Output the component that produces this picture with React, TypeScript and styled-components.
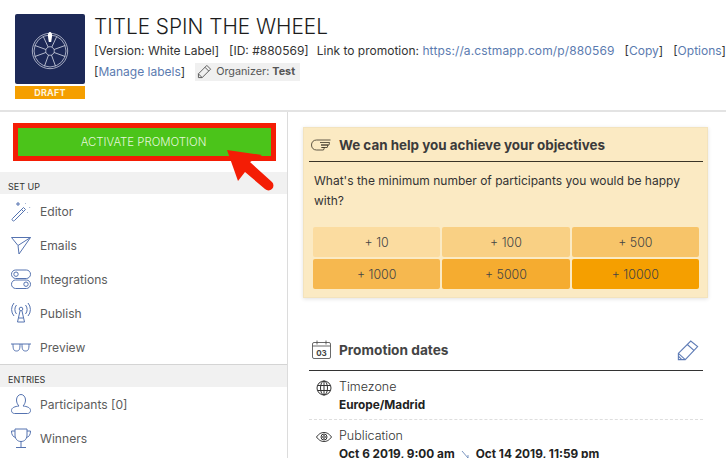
import * as React from 'react';
import styled, { createGlobalStyle } from 'styled-components';

const GlobalStyle = createGlobalStyle`
  html, body {
    margin: 0;
    padding: 0;
    background: #fff;
    font-family: Inter, "Liberation Sans", sans-serif;
    color: #333;
  }
  * { box-sizing: border-box; }
`;

const Page = styled.div`
  position: relative;
  width: 726px;
  height: 458px;
  overflow: hidden;
`;

const Header = styled.header`
  display: flex;
  height: 112px;
  padding: 14px 0 0 15px;
  border-bottom: 2px solid #e3e3e3;
`;

const LogoColumn = styled.div`
  display: flex;
  flex-direction: column;
  gap: 2px;
  width: 70px;
  margin-right: 9px;
`;

const LogoTile = styled.div`
  display: flex;
  align-items: center;
  justify-content: center;
  width: 70px;
  height: 70px;
  background: #1d2957;
  border-radius: 2px;
`;

const DraftBadge = styled.div`
  height: 13px;
  background: #f59f00;
  color: #fdf3dc;
  font-size: 9px;
  font-weight: 700;
  line-height: 13px;
  text-align: center;
  letter-spacing: 0.2px;
`;

const HeaderText = styled.div`
  display: flex;
  flex-direction: column;
`;

const Title = styled.h1`
  margin: 0;
  font-size: 20.8px;
  font-weight: 300;
  line-height: 25px;
  color: #1c1c1c;
  white-space: nowrap;
`;

const MetaRow = styled.div`
  display: flex;
  align-items: center;
  height: 21px;
  font-size: 12px;
  color: #333;
  white-space: nowrap;
`;

const FirstMeta = styled(MetaRow)`
  margin-top: 1px;
`;

const MetaItem = styled.span<{ $gap?: number }>`
  margin-right: ${(p) => p.$gap ?? 10}px;
`;

const Link = styled.span<{ $wide?: boolean }>`
  color: #5b7bb0;
  letter-spacing: ${(p) => (p.$wide ? '0.13px' : 'normal')};
`;

const OrganizerTag = styled.span`
  display: flex;
  align-items: center;
  gap: 4px;
  height: 18px;
  padding: 0 5px 0 2px;
  background: #f0f0f0;
  color: #555;
  font-size: 10.8px;
  b { font-weight: 700; }
`;

const Body = styled.div`
  display: flex;
  height: 346px;
`;

const Sidebar = styled.aside`
  flex: none;
  width: 288px;
  border-right: 1px solid #dcdcdc;
`;

const ActivateWrap = styled.div`
  padding: 11px 11px 11px 13px;
`;

const ActivateButton = styled.div`
  height: 38px;
  padding-right: 2px;
  background: #4bc41a;
  border: 5px solid #f41d05;
  color: #e6f7dc;
  font-size: 11.4px;
  font-weight: 300;
  line-height: 29px;
  text-align: center;
`;

const SectionLabel = styled.div<{ $ruled?: boolean }>`
  height: ${(p) => (p.$ruled ? '23px' : '22px')};
  padding: 9px 0 0 8px;
  background: #f1f1f1;
  border-top: ${(p) => (p.$ruled ? '1px solid #d4d4d4' : 'none')};
  font-size: 9px;
  line-height: 12px;
  color: #333;
`;

const MenuItem = styled.div`
  display: flex;
  align-items: center;
  height: 34px;
  padding-left: 10px;
  font-size: 12.1px;
  color: #5c5c5c;
`;

const MenuIcon = styled.svg`
  flex: none;
  width: 22px;
  height: 22px;
  margin-right: 8px;
  fill: none;
  stroke: #5573b0;
  stroke-width: 1;
`;

const Main = styled.main`
  flex: 1;
  padding: 15px 18px 0 15px;
`;

const ObjectivesCard = styled.section`
  height: 171px;
  padding: 0 4px 0 5px;
  background: #fbeac3;
  border: 1px solid #f3e3bd;
  box-shadow: 0 1px 4px rgba(0, 0, 0, 0.12);
`;

const CardTitle = styled.div`
  display: flex;
  align-items: center;
  gap: 8px;
  height: 34px;
  padding-left: 2px;
  border-bottom: 1px solid #3a3426;
  font-size: 13.4px;
  font-weight: 700;
  color: #3b3b3b;
  white-space: nowrap;
`;

const Question = styled.p`
  margin: 9px 0 0;
  padding: 0 5px;
  font-size: 12px;
  line-height: 20px;
  color: #333;
`;

const AmountGrid = styled.div`
  display: grid;
  grid-template-columns: repeat(3, 1fr);
  grid-auto-rows: 30px;
  gap: 2px;
  margin: 16px 4px 0;
`;

const AmountButton = styled.div<{ $bg: string }>`
  display: flex;
  align-items: center;
  justify-content: center;
  background: ${(p) => p.$bg};
  border-radius: 2px;
  font-size: 12.4px;
  font-weight: 300;
  color: #444;
`;

const DatesPanel = styled.section`
  margin: 32px 5px 0 6px;
`;

const DatesHeader = styled.div`
  display: flex;
  align-items: center;
  gap: 8px;
  height: 41px;
  padding: 0 0 1px 3px;
  border-bottom: 1px solid #333;
  font-size: 13.7px;
  font-weight: 700;
  color: #444;
`;

const EditIcon = styled.svg`
  margin: 0 4px 0 auto;
  width: 22px;
  height: 22px;
  fill: none;
  stroke: #5f7cb6;
  stroke-width: 0.8;
`;

const DateRow = styled.div<{ $dashed?: boolean }>`
  display: flex;
  height: 49px;
  padding: 9px 0 0 7px;
  border-bottom: ${(p) => (p.$dashed ? '1px dashed #dedede' : 'none')};
`;

const DateIcon = styled.svg`
  flex: none;
  width: 16px;
  height: 16px;
  margin-right: 7px;
  fill: none;
  stroke: #333;
  stroke-width: 1;
`;

const DateText = styled.div`
  display: flex;
  flex-direction: column;
  gap: 4px;
  font-size: 12.5px;
  line-height: 14px;
  font-weight: 300;
  color: #333;
  b {
    display: flex;
    align-items: center;
    font-size: 11.8px;
    font-weight: 700;
    color: #222;
    white-space: nowrap;
  }
`;

const DateSep = styled.svg`
  flex: none;
  width: 9px;
  height: 10px;
  margin: 2px 6px 0;
  fill: none;
  stroke: #5b7bb0;
  stroke-width: 0.8;
`;

const RedArrow = styled.svg`
  position: absolute;
  left: 222px;
  top: 146px;
  width: 56px;
  height: 46px;
`;

function Wheel() {
  const spokes = [25, 70, 110, 160, 200, 250, 290, 335];
  return (
    <svg width="38" height="42" viewBox="0 0 38 42" fill="none" stroke="#dfe3ee" strokeWidth="0.7">
      <circle cx="19" cy="23" r="17.7" />
      <circle cx="19" cy="23" r="16" />
      <circle cx="19" cy="23" r="4.300" />
      {spokes.map((a) => (
        <line key={a} x1="19" y1="18.700" x2="19" y2="7" transform={`rotate(${a} 19 23)`} />
      ))}
      <path d="M19 4c1.400 0 2.200 1.800 2.100 4L20.200 14h-2.400l-.9-6C16.800 5.800 17.600 4 19 4z" fill="#fff" stroke="none" />
    </svg>
  );
}

function Pencil() {
  return (
    <svg width="15" height="15" viewBox="0 0 16 16" fill="none" stroke="#555" strokeWidth="1">
      <path d="M1.500 10.500 10.500 1.500l4 4-9 9h-4zM8.500 3.500l4 4M1.500 10.500l4 4" />
    </svg>
  );
}

const menuSetup: [string, React.ReactNode][] = [
  ['Editor', (
    <>
      <path d="M2.500 18.500 13.500 7.500l2 2-11 11a1.400 1.400 0 0 1-2-2zM11.500 9.500l2 2" />
      <path d="M8 2v4M6 4h4M19.500 7.500h.6M15 3l.5.5M17 12l.5.5" />
    </>
  )],
  ['Emails', <path d="M1.500 3.500h19L9 20l-1-8.500zM8 11.500 20.500 3.500" />],
  ['Integrations', (
    <>
      <rect x="1.500" y="2" width="19" height="8.500" rx="4.200" />
      <rect x="1.500" y="12" width="19" height="8.500" rx="4.200" />
      <circle cx="6" cy="6.200" r="2.200" />
      <circle cx="16" cy="16.200" r="2.200" />
    </>
  )],
  ['Publish', (
    <>
      <circle cx="11" cy="7" r="1.800" />
      <path d="M10 9 7.500 20h7L12 9M9 16h4" />
      <path d="M6.500 3a7 7 0 0 0 0 9M15.500 3a7 7 0 0 1 0 9M4 1a10 10 0 0 0 0 13M18 1a10 10 0 0 1 0 13" />
    </>
  )],
  ['Preview', (
    <path d="M1 8h20M3 8c0 5 .5 7 3.500 7S10 13 10 8M12 8c0 5 .5 7 3.500 7S19 13 19 8" />
  )],
];

const menuEntries: [string, React.ReactNode][] = [
  ['Participants [0]', (
    <path d="M6.500 7a4.500 5.500 0 0 1 9 0c0 3-1.500 5-2.500 6 4 .5 7.500 1.500 7.500 4.500 0 2-1.500 3-3 3H4.500c-1.500 0-3-1-3-3 0-3 3.500-4 7.500-4.500-1-1-2.500-3-2.500-6z" />
  )],
  ['Winners', (
    <path d="M5 2h12v6c0 4-2.500 6.500-6 6.500S5 12 5 8zM5 4H1.500c0 4 1.500 6 4.500 6.500M17 4h3.500c0 4-1.500 6-4.500 6.500M11 14.500V20M6 20.500h10" />
  )],
];

const amounts: [string, string][] = [
  ['+ 10', '#fbdca0'],
  ['+ 100', '#f9d084'],
  ['+ 500', '#f7c469'],
  ['+ 1000', '#f6b84f'],
  ['+ 5000', '#f5ac30'],
  ['+ 10000', '#f59f00'],
];

export default function App() {
  return (
    <Page>
      <GlobalStyle />
      <Header>
        <LogoColumn>
          <LogoTile><Wheel /></LogoTile>
          <DraftBadge>DRAFT</DraftBadge>
        </LogoColumn>
        <HeaderText>
          <Title>TITLE SPIN THE WHEEL</Title>
          <FirstMeta>
            <MetaItem>[Version: White Label]</MetaItem>
            <MetaItem $gap={8}>[ID: #880569]</MetaItem>
            <MetaItem>Link to promotion: <Link $wide>https://a.cstmapp.com/p/880569</Link></MetaItem>
            <MetaItem>[<Link>Copy</Link>]</MetaItem>
            <MetaItem>[<Link>Options</Link>]</MetaItem>
          </FirstMeta>
          <MetaRow>
            <MetaItem>[<Link>Manage labels</Link>]</MetaItem>
            <OrganizerTag>
              <Pencil />
              <span>Organizer: <b>Test</b></span>
            </OrganizerTag>
          </MetaRow>
        </HeaderText>
      </Header>
      <Body>
        <Sidebar>
          <ActivateWrap>
            <ActivateButton>ACTIVATE PROMOTION</ActivateButton>
          </ActivateWrap>
          <SectionLabel>SET UP</SectionLabel>
          {menuSetup.map(([label, icon]) => (
            <MenuItem key={label}>
              <MenuIcon viewBox="0 0 22 22">{icon}</MenuIcon>
              {label}
            </MenuItem>
          ))}
          <SectionLabel $ruled>ENTRIES</SectionLabel>
          {menuEntries.map(([label, icon]) => (
            <MenuItem key={label}>
              <MenuIcon viewBox="0 0 22 22">{icon}</MenuIcon>
              {label}
            </MenuItem>
          ))}
        </Sidebar>
        <Main>
          <ObjectivesCard>
            <CardTitle>
              <svg width="20" height="12" viewBox="0 0 20 12" fill="none" stroke="#3a3426" strokeWidth="0.8">
                <path d="M19.500 1H5.500C2.500 1 .5 3 .5 6s2 5 5 5h7l1-2.500h-3M9 3.500h9.500L18 6h-8M10 6h7l-.8 2.500h-5.700" />
              </svg>
              We can help you achieve your objectives
            </CardTitle>
            <Question>What's the minimum number of participants you would be happy with?</Question>
            <AmountGrid>
              {amounts.map(([label, bg]) => (
                <AmountButton key={label} $bg={bg}>{label}</AmountButton>
              ))}
            </AmountGrid>
          </ObjectivesCard>
          <DatesPanel>
            <DatesHeader>
              <svg width="19" height="19" viewBox="0 0 19 19" fill="none" stroke="#444" strokeWidth="0.8">
                <rect x="0.500" y="2.500" width="18" height="16" rx="1.500" />
                <path d="M0.500 6h18M5 .5v4M14 .5v4" />
                <text x="9.500" y="15.500" fontSize="8" textAnchor="middle" fill="#444" stroke="none" fontFamily="Inter, sans-serif">03</text>
              </svg>
              Promotion dates
              <EditIcon viewBox="0 0 16 16">
                <path d="M1 10.500 10 1.500 15 5.500 6 15H1zM7.500 4l5 4.500M1 10.500 6 15M1 12.500l2.500 2.500" />
              </EditIcon>
            </DatesHeader>
            <DateRow $dashed>
              <DateIcon viewBox="0 0 16 16">
                <circle cx="8" cy="8" r="7" />
                <ellipse cx="8" cy="8" rx="3.500" ry="7" />
                <path d="M8 1v14M1.500 5.500h13M1.500 10.500h13" />
              </DateIcon>
              <DateText>
                Timezone
                <b>Europe/Madrid</b>
              </DateText>
            </DateRow>
            <DateRow>
              <DateIcon viewBox="0 0 16 16">
                <path d="M.5 8C3 4.500 5.500 3.500 8 3.500S13 4.500 15.500 8C13 11.500 10.500 12.500 8 12.500S3 11.500 .5 8z" />
                <circle cx="8" cy="8" r="3" />
                <circle cx="8" cy="8" r="1.300" />
              </DateIcon>
              <DateText>
                Publication
                <b>
                  Oct 6 2019, 9:00 am
                  <DateSep viewBox="0 0 9 10"><path d="M1 1 7 8M7 8V5" /></DateSep>
                  Oct 14 2019, 11:59 pm
                </b>
              </DateText>
            </DateRow>
          </DatesPanel>
        </Main>
      </Body>
      <RedArrow viewBox="0 0 56 46">
        <path d="M5 4 40 9 28 16 50 36a4.900 4.900 0 0 1-7 7L23 26 16 35z" fill="#f41d05" />
      </RedArrow>
    </Page>
  );
}
